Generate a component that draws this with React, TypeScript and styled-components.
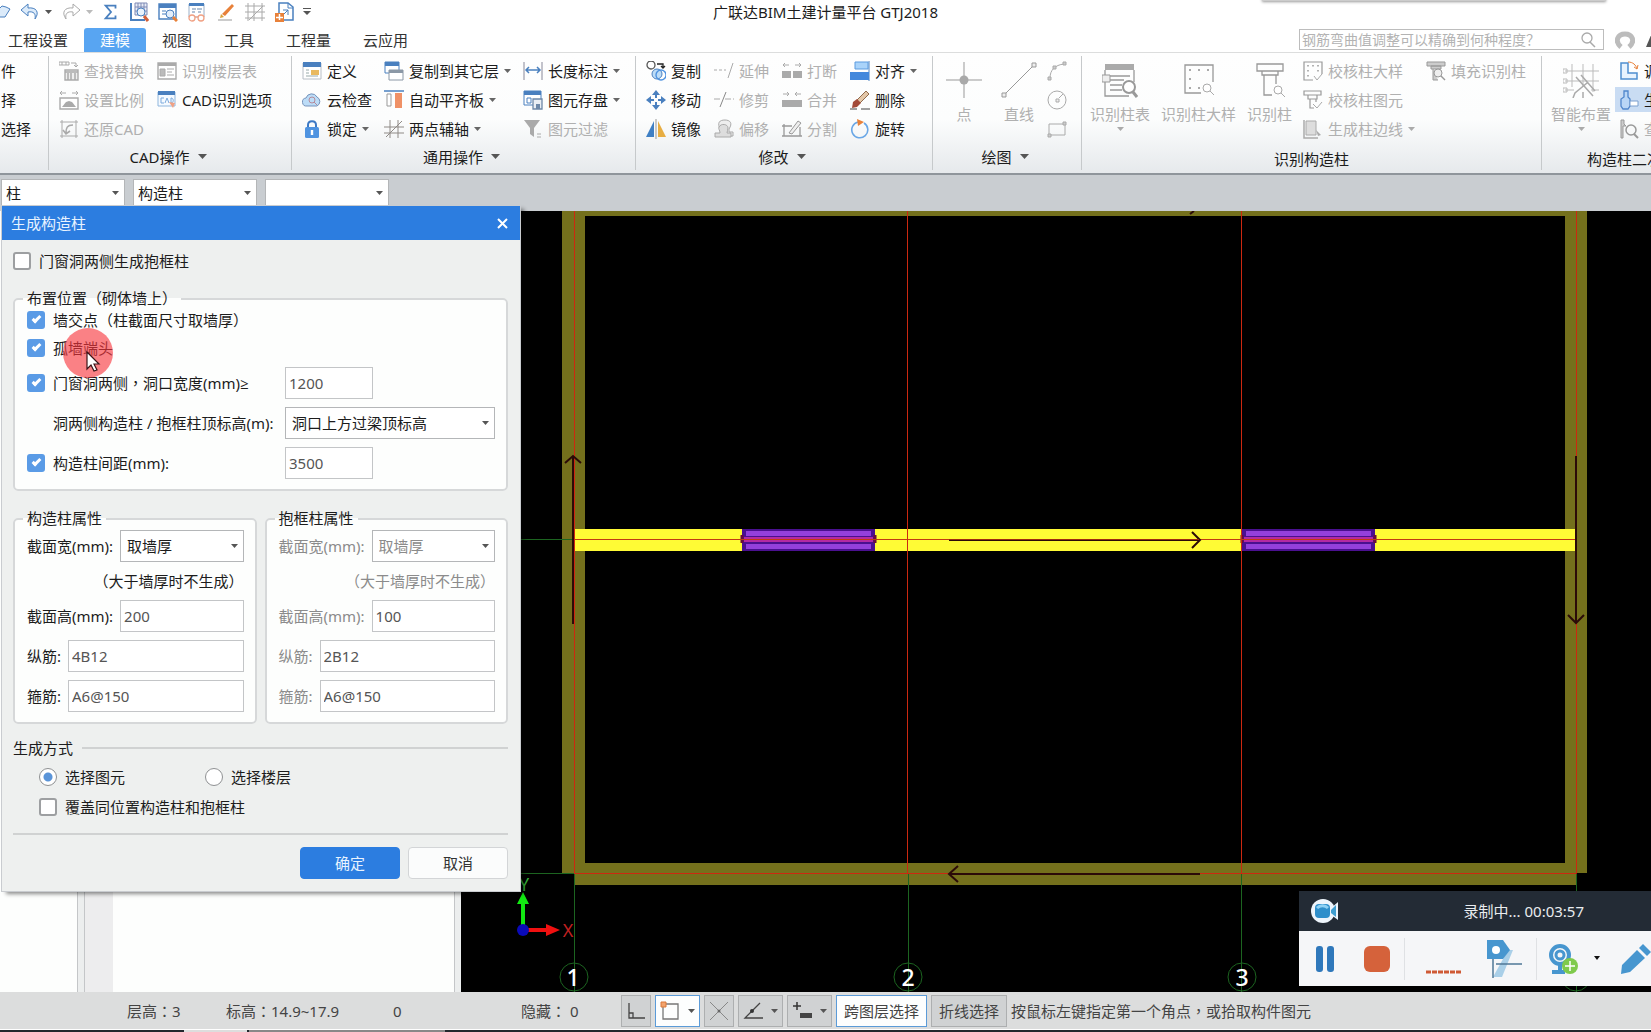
import React from "react";
import styled, { createGlobalStyle, css } from "styled-components";

const Global = createGlobalStyle`
  *, *::before, *::after { box-sizing: border-box; }
  html, body, #root { height: 100%; }
  body {
    margin: 0;
    overflow: hidden;
    background: #fff;
    color: #1c1c1c;
    font: 15px/22px "Noto Sans", "Open Sans", "Noto Sans CJK SC", sans-serif;
  }
  button, input, select { font: inherit; color: inherit; margin: 0; }
  button { border: 0; background: none; padding: 0; white-space: nowrap; cursor: pointer; }
  svg { display: block; flex: none; }
  fieldset { margin: 0; min-width: 0; }
`;

const BLUE = "#4a80bf";
const ORANGE = "#e8813a";
const GRAY = "#aaa";

/* ---------- shell ---------- */

const Shell = styled.div`
  display: flex;
  flex-direction: column;
  height: 100vh;
  overflow: hidden;
  position: relative;
`;

const TitleBar = styled.header`
  display: grid;
  grid-template-columns: 1fr auto 1fr;
  align-items: center;
  height: 24px;
  flex: none;
`;

const QuickTools = styled.div`
  display: flex;
  align-items: center;
  gap: 9px;
  margin-left: -9px;
`;

const QuickButton = styled.button`
  display: flex;
  align-items: center;
  gap: 5px;
`;

const Title = styled.h1`
  margin: 0;
  font-size: 15px;
  font-weight: 400;
  line-height: 22px;
`;

const FloatingEdge = styled.div`
  position: absolute;
  top: -6px;
  right: 45px;
  width: 344px;
  height: 7px;
  background: #ccc;
  box-shadow: 0 1px 3px #999;
`;

const TabRow = styled.nav`
  display: flex;
  align-items: flex-end;
  height: 29px;
  flex: none;
  border-bottom: 1px solid #dcdddd;
`;

const Tabs = styled.div`
  display: flex;
  margin-left: -8px;
`;

const Tab = styled.button<{ $active?: boolean }>`
  height: 24px;
  padding: 0 16px;
  line-height: 22px;
  border-radius: 3px 3px 0 0;
  color: ${(p) => (p.$active ? "#fff" : "#333")};
  background: ${(p) => (p.$active ? "#58a5f2" : "transparent")};
`;

const TabTools = styled.div`
  display: flex;
  align-items: center;
  gap: 11px;
  margin-left: auto;
  height: 25px;
  width: 352px;
  overflow: hidden;
`;

const SearchBox = styled.label`
  display: flex;
  align-items: center;
  flex: 0 0 305px;
  height: 21px;
  padding-right: 7px;
  border: 1px solid #bdbdbd;
  background: #fff;
  input {
    flex: 1;
    min-width: 0;
    border: 0;
    outline: 0;
    padding: 0 2px;
    height: 19px;
    background: none;
    font-size: 14px;
  }
  input::placeholder { color: #b3b3b3; opacity: 1; }
`;

/* Full-width punctuation that sits in the middle of its cell. */
const Mark = styled.span`
  font-family: "Noto Sans CJK TC", sans-serif;
`;

/* ---------- ribbon ---------- */

const Ribbon = styled.section`
  display: flex;
  flex: none;
  height: 122px;
  overflow: hidden;
  padding: 3px 0;
  background: linear-gradient(#fefefe 0%, #fcfdfd 55%, #e6e9ec 100%);
  border-bottom: 2px solid #8f959b;
`;

const Group = styled.div<{ $width: number }>`
  display: flex;
  flex-direction: column;
  flex: 0 0 ${(p) => p.$width}px;
  border-right: 1px solid #c6c9cb;
  overflow: hidden;
`;

const GroupBody = styled.div<{ $gap?: number; $pad?: number }>`
  display: flex;
  height: 87px;
  flex: none;
  gap: ${(p) => p.$gap ?? 13}px;
  padding-left: ${(p) => p.$pad ?? 10}px;
`;

const Column = styled.div`
  display: flex;
  flex-direction: column;
  align-items: flex-start;
  flex: none;
`;

const Tool = styled.button<{ $on?: boolean; $framed?: boolean }>`
  display: flex;
  align-items: center;
  gap: 5px;
  height: 29px;
  color: ${(p) => (p.disabled ? "#b0b0b0" : "#1c1c1c")};
  cursor: ${(p) => (p.disabled ? "default" : "pointer")};
  ${(p) => p.$framed && css`padding: 0 4px;`}
  ${(p) => p.$on && css`background: #c9dcf3; height: 25px; margin: 2px 0;`}
`;

const BigTool = styled.button<{ $width: number }>`
  display: flex;
  flex-direction: column;
  align-items: center;
  flex: 0 0 ${(p) => p.$width}px;
  padding-top: 6px;
  color: #b0b0b0;
  cursor: default;
  span { margin: 5px 0 2px; line-height: 22px; }
`;

const GroupLabel = styled.div<{ $plain?: boolean }>`
  display: flex;
  align-items: center;
  justify-content: center;
  gap: 8px;
  height: 30px;
  padding-right: ${(p) => (p.$plain ? 0 : 4)}px;
  padding-top: ${(p) => (p.$plain ? 4 : 0)}px;
  white-space: nowrap;
`;

const FilterBar = styled.div`
  display: flex;
  gap: 8px;
  flex: none;
  height: 36px;
  padding: 4px 1px;
  background: #c9cdd1;
`;

const SelectShell = styled.span<{ $width?: number; $height?: number; $muted?: boolean }>`
  display: flex;
  align-items: center;
  position: relative;
  flex: ${(p) => (p.$width ? `0 0 ${p.$width}px` : "1 1 0")};
  height: ${(p) => p.$height ?? 32}px;
  min-width: 0;
  border: 1px solid #b4b6b8;
  background: #fff;
  color: ${(p) => (p.$muted ? "#8b8b8b" : "#1c1c1c")};
  select {
    appearance: none;
    width: 100%;
    height: 100%;
    border: 0;
    outline: 0;
    padding: 0 20px 0 ${(p) => (p.$width ? 4 : 6)}px;
    background: transparent;
    color: inherit;
    opacity: 1;
  }
  svg { position: absolute; right: 5px; pointer-events: none; }
`;

/* ---------- workspace ---------- */

const Work = styled.main`
  display: flex;
  flex: 1;
  min-height: 0;
  background: #eceeee;
`;

const SidePanel = styled.aside<{ $width: number; $gutter?: boolean }>`
  flex: 0 0 ${(p) => p.$width}px;
  margin-right: 6px;
  border-right: 1px solid #c4c6c8;
  border-left: ${(p) => (p.$gutter ? "1px solid #c4c6c8" : "0")};
  background: ${(p) => (p.$gutter ? "linear-gradient(90deg, #ededee 28px, #fdfefd 28px)" : "#fdfefd")};
`;

const Canvas = styled.div`
  flex: 1;
  min-width: 0;
  background: #000;
  overflow: hidden;
`;

const StatusBar = styled.footer`
  display: flex;
  align-items: center;
  gap: 4px;
  flex: none;
  height: 38px;
  background: #dcdddd;
  border-bottom: 1px solid #fff;
  color: #444;
  white-space: nowrap;
`;

const StatusInfo = styled.div`
  display: grid;
  grid-template-columns: 99px 167px 128px 96px;
  flex: 0 0 617px;
  padding-left: 127px;
`;

const StatusButton = styled.button<{ $on?: boolean; $pad?: number }>`
  display: flex;
  align-items: center;
  justify-content: center;
  gap: 8px;
  height: 32px;
  padding: 0 ${(p) => p.$pad ?? 4}px;
  color: #444;
  border: 1px solid ${(p) => (p.$on ? "#5b9bd8" : "#adafb0")};
  background: ${(p) => (p.$on ? "#fdfefe" : "#d0d2d3")};
`;

const TaskStrip = styled.div`
  flex: none;
  height: 2px;
  background: linear-gradient(90deg, #23272d 184px, #ddd 184px, #ddd 247px, #23272d 247px, #23272d 249px, #888 249px, #888 445px, #23272d 445px);
`;

/* ---------- dialog ---------- */

const Dialog = styled.form`
  position: absolute;
  left: 2px;
  top: 206px;
  width: 518px;
  background: #eef0ef;
  box-shadow: 0 0 0 1px #c9ccd0, 4px 3px 4px rgba(0, 0, 0, 0.45);
`;

const DialogTitle = styled.div`
  display: flex;
  align-items: center;
  justify-content: space-between;
  height: 34px;
  padding: 0 12px 0 9px;
  background: #2c7de0;
  color: #e8f3ff;
`;

const DialogBody = styled.div`
  padding: 10px 12px 12px 11px;
`;

const CheckLabel = styled.label<{ $height?: number }>`
  display: flex;
  align-items: center;
  gap: 8px;
  height: ${(p) => p.$height ?? 32}px;
  white-space: nowrap;
`;

const CheckInput = styled.input`
  appearance: none;
  flex: none;
  width: 18px;
  height: 18px;
  border: 2px solid #9d9fa1;
  border-radius: ${(p) => (p.type === "radio" ? "50%" : "3px")};
  background: #fff;
  &[type="checkbox"]:checked {
    border-color: #5a9be6;
    background: #5a9be6;
    display: grid;
    place-items: center;
  }
  &[type="checkbox"]:checked::after {
    content: "";
    width: 9px;
    height: 5px;
    margin-top: -3px;
    border: solid #fff;
    border-width: 0 0 3px 3px;
    transform: rotate(-45deg);
  }
  &[type="radio"] { border-width: 1px; border-color: #8f9193; }
  &[type="radio"]:checked { background: radial-gradient(circle, #5a94d8 0 4px, #fff 5px); }
`;

const Box = styled.fieldset<{ $muted?: boolean }>`
  position: relative;
  flex: 1 1 0;
  padding: 10px 11px 10px 12px;
  border: 2px solid #d6d8d9;
  border-radius: 5px;
  background: #fdfefd;
  color: ${(p) => (p.$muted ? "#8b8b8b" : "#1c1c1c")};
`;

const PlacementBox = styled(Box)`
  margin-top: 26px;
  padding-top: 8px;
`;

const BoxTitle = styled.legend`
  position: absolute;
  top: -13px;
  left: 8px;
  padding: 0 4px;
  line-height: 22px;
  color: #1c1c1c;
  background: linear-gradient(#eef0ef 50%, #fdfefd 50%);
`;

const PlacementGrid = styled.div`
  display: grid;
  grid-template-columns: 258px 1fr;
  align-items: center;
  row-gap: 8px;
  margin-top: 3px;
`;

const Indented = styled.label`
  padding-left: 26px;
  white-space: nowrap;
`;

const TextField = styled.input<{ $width?: number }>`
  flex: 1 1 0;
  min-width: 0;
  width: ${(p) => (p.$width ? `${p.$width}px` : "auto")};
  height: 32px;
  padding: 0 3px;
  border: 1px solid #c3c5c7;
  outline: 0;
  background: #fff;
  color: #555;
`;

const BoxPair = styled.div`
  display: flex;
  gap: 8px;
  margin: 27px 0 13px;
`;

const FieldStack = styled.div`
  display: flex;
  flex-direction: column;
  gap: 8px;
`;

const Field = styled.label`
  display: flex;
  align-items: center;
  gap: 7px;
  white-space: nowrap;
`;

const Note = styled.div`
  height: 22px;
  text-align: right;
`;

const SectionTitle = styled.div`
  display: flex;
  align-items: center;
  gap: 9px;
  &::after { content: ""; flex: 1; height: 2px; background: #d0d2d2; }
`;

const ModeGrid = styled.div`
  display: grid;
  grid-template-columns: 166px 1fr;
  padding: 2px 26px 12px;
`;

const Wide = styled.div`
  grid-column: 1 / -1;
`;

const DialogFooter = styled.div`
  display: flex;
  justify-content: flex-end;
  gap: 8px;
  padding-top: 12px;
  border-top: 2px solid #d0d2d2;
`;

const DialogButton = styled.button<{ $primary?: boolean }>`
  width: 100px;
  height: 32px;
  border-radius: 4px;
  border: 1px solid ${(p) => (p.$primary ? "#2c7de0" : "#d3d5d7")};
  background: ${(p) => (p.$primary ? "#2c7de0" : "#fbfcfc")};
  color: ${(p) => (p.$primary ? "#e8f3ff" : "#333")};
`;

const Pointer = styled.div`
  position: absolute;
  left: 63px;
  top: 328px;
  pointer-events: none;
`;

/* ---------- recorder ---------- */

const Recorder = styled.section`
  position: absolute;
  right: 0;
  bottom: 46px;
  width: 352px;
  overflow: hidden;
`;

const RecorderHead = styled.div`
  display: flex;
  align-items: center;
  justify-content: space-between;
  height: 40px;
  padding: 0 67px 0 11px;
  background: #232b35;
  color: #e9ecef;
`;

const RecorderBody = styled.div`
  display: grid;
  grid-template-columns: 36px 53px 79px 53px 49px 35px 32px;
  align-items: center;
  height: 55px;
  padding-left: 16px;
  background: #f5f6f8;
`;

const RecorderCell = styled.button<{ $pad?: number }>`
  display: flex;
  align-items: center;
  height: 42px;
  padding-left: ${(p) => p.$pad ?? 0}px;
  ${(p) => p.$pad && css`border-left: 1px solid #dfe1e4;`}
`;

/* ---------- icons ---------- */

const Caret = ({ size = 7, color = "#555" }: { size?: number; color?: string }) => (
  <svg width={size} height={size === 7 ? 4 : 5} viewBox="0 0 8 5" preserveAspectRatio="none" aria-hidden="true">
    <path d="M0 0h8L4 5z" fill={color} />
  </svg>
);

const art: Record<string, React.ReactNode> = {
  folder: <path d="M0 15 5 6h4l2-2 4 1 4 2-5 8z" fill="#dcebfa" stroke={BLUE} />,
  undo: <path d="M8 2 1 8l7 6v-4c6-1 8 2 7 7 5-7 1-12-7-11z" fill="#dcebfa" stroke={BLUE} strokeLinejoin="round" />,
  redo: <path d="m12 2 7 6-7 6v-4c-6-1-8 2-7 7-5-7-1-12 7-11z" fill="#fff" stroke="#aaa" strokeLinejoin="round" />,
  sigma: <path d="M15 6V3H4l6 7-6 7h11v-3" fill="none" stroke={BLUE} strokeWidth="2" />,
  report: <><path d="M2 1v17h14" fill="none" stroke={BLUE} strokeWidth="2" /><path d="M6 1h12v12H6zM9 1v12M12 1v12M15 1v12M6 5h12M6 9h12" fill="#e8ecf6" stroke="#7f8ab5" /><circle cx="12" cy="10" r="4" fill="#eaf3fc" stroke={BLUE} /><path d="m15 14 4 5" stroke="#d2603a" strokeWidth="3" /></>,
  find: <><path d="M1 2h17v15H1z" fill="#fff" stroke={BLUE} strokeWidth="1.4" /><path d="M1 2h17v4H1z" fill={BLUE} /><path d="M4 9h4M4 12h4" stroke={BLUE} /><circle cx="12" cy="12" r="4" fill="#e2eefb" stroke={BLUE} /><path d="m15 15 4 4" stroke={ORANGE} strokeWidth="3" /></>,
  glasses: <><path d="M2 2h15v13H2z" fill="#fff" stroke="#9bb0c8" /><path d="M2 1h15v3H2z" fill={BLUE} /><path d="M5 7h4M10 7h5M5 10h3M11 10h3" stroke="#9bb0c8" strokeWidth="1.400" /><circle cx="5" cy="16" r="3" fill="#fff" stroke="#f0a184" strokeWidth="1.300" /><circle cx="14" cy="16" r="3" fill="#fff" stroke="#f0a184" strokeWidth="1.300" /><path d="M8 15h3" stroke="#f0a184" /></>,
  brush: <><path d="m6 12 10-10 2 2-9 10z" fill={ORANGE} /><path d="m5 12 3 3-4 1z" fill="#d9a13a" /><path d="M2 18h14" stroke="#999" /></>,
  grid: <path d="M3 1v18M9 1v18M17 1v18M0 4h20M0 10h20M0 16h20M4 18 18 4" stroke="#aaa" fill="none" />,
  addpage: <><path d="M5 1h9l5 4v13H5z" fill="#fff" stroke={BLUE} strokeWidth="1.5" /><path d="M14 1v5h5" fill="none" stroke={BLUE} /><path d="M1 11h9v9H1z" fill={ORANGE} /><path d="M5.500 12v6M2 15.500h7" stroke="#fff" strokeWidth="1.500" /><path d="M9 8h5v5M14 8l-4 4" fill="none" stroke={BLUE} /></>,
  replace: <><path d="M0 1h10v3H0zM3 1v3M7 1v3M12 2h5v4M15 4l2 2 2-2" fill="none" stroke={GRAY} /><path d="M6 9h13v10H6z" fill="#eee" stroke={GRAY} strokeWidth="1.400" /><path d="M6 11h13M9 12v7M12 12v7M16 12v7" stroke={GRAY} strokeWidth="1.500" /></>,
  scale: <><path d="M1 3h6M13 3h6M3 1 1 3l2 2M17 1l2 2-2 2" fill="none" stroke={GRAY} /><path d="M1 8h18v11H1z" fill="#fff" stroke={GRAY} strokeWidth="1.400" /><path d="m3 17 4-5 3-1 3 1 4 5z" fill={GRAY} /></>,
  restore: <><path d="M3 1v18M1 3h18M17 1v18M1 17h18" fill="none" stroke={GRAY} /><path d="M14 6c-6 0-7 3-7 8M4 11l3 4 4-3" fill="none" stroke={GRAY} strokeWidth="1.600" /></>,
  floor: <><path d="M1 2h18v16H1z" fill="#fff" stroke={GRAY} strokeWidth="1.400" /><path d="M1 2h18v3H1z" fill={GRAY} /><path d="M3 8h5v7H3z" fill="#bbb" /><path d="M3 8h5v7H3zM10 8h7M10 11h5M10 14h7" fill="none" stroke={GRAY} /></>,
  cad: <><path d="M1 2h17v14H1z" fill="#f5faff" stroke="#8fb6dd" /><path d="M1 1h17v4H1z" fill={BLUE} /><path d="M7 8H4v5h3M8 13l2-5 2 5M14 8v5c3 0 3-5 0-5" fill="none" stroke="#7aa9dc" /><path d="m12 12 6 1-2 5z" fill="#f0a184" /></>,
  define: <><path d="M1 2h18v16H1z" fill="#fff" stroke="#b8bec6" /><path d="M1 1h18v5H1z" fill={BLUE} /><path d="M4 9h3M4 12h3M4 15h12" stroke="#9aa" /><path d="M9 9h8v5H9z" fill="#e9b95f" /></>,
  cloud: <><path d="M5 16a4 4 0 0 1-1-8 6 6 0 0 1 11-1 5 5 0 0 1 0 9z" fill="#bcdcf7" stroke="#7693bb" /><circle cx="10" cy="10" r="3" fill="none" stroke="#b58b9a" /><path d="m12 12 3 3" stroke="#b58b9a" /></>,
  lock: <><path d="M6 9V6c0-5 8-5 8 0v3" fill="none" stroke="#3d79c4" strokeWidth="2" /><rect x="3" y="8" width="14" height="11" rx="1.500" fill="#4f93e0" /><path d="M10 11v5" stroke="#fff" strokeWidth="2.400" /></>,
  copyfloor: <><path d="M1 1h14v11H1z" fill="#fff" stroke={BLUE} /><path d="M1 1h14v4H1z" fill={BLUE} /><path d="M5 9h14v10H5z" fill="#fff" stroke="#8b98a6" /><path d="M5 9h14v3H5z" fill="#8b98a6" /></>,
  align: <><path d="M0 1h20" stroke={BLUE} strokeWidth="1.500" /><path d="M3 4h4v12H3z" fill="#fff" stroke="#999" /><path d="M11 3h7v15h-7z" fill="#ef9166" /></>,
  axis: <path d="M6 1v18M14 1v18M0 8h20M0 14h20M2 18 18 2" fill="none" stroke="#8f8a86" />,
  length: <><path d="M1 1v18M19 1v18" stroke="#889" /><path d="M3 9h14M6 6 3 9l3 3M14 6l3 3-3 3" fill="none" stroke={BLUE} strokeWidth="1.500" /></>,
  save: <><path d="M1 1h17v14H1z" fill="#fff" stroke={BLUE} /><path d="M1 1h17v4H1z" fill={BLUE} /><path d="M4 8h4v5H4z" fill="#fff" stroke={BLUE} /><path d="M10 9h9v10h-9z" fill="#e9eef4" stroke="#6d88a8" strokeWidth="1.300" /><path d="M13 14h4v5h-4z" fill="#6d88a8" /></>,
  filter: <><path d="M1 1h16l-6 8v9l-4-3V9z" fill={GRAY} /><path d="M14 15h4M14 18h4" stroke={GRAY} /></>,
  copy: <><circle cx="5" cy="4" r="4" fill="#fff" stroke="#555" strokeWidth="1.300" /><path d="M11 3h6v4M15 5l2 2 2-2" fill="none" stroke="#222" strokeWidth="1.300" /><circle cx="11" cy="13" r="5" fill="#bcdcf7" stroke={BLUE} /><circle cx="15" cy="14" r="5" fill="none" stroke="#4f93e0" strokeWidth="1.400" /></>,
  move: <path d="m10 0 4 5h-3v3H9V5H6zM10 20l4-5h-3v-3H9v3H6zM0 10l5-4v3h3v2H5v3zM20 10l-5-4v3h-3v2h3v3z" fill={BLUE} />,
  mirror: <><path d="M8 2v16H0z" fill="#3f7fc4" /><path d="M12 2v16h8z" fill="#e7ad42" /><path d="M10 0v20" stroke="#999" /></>,
  extend: <><path d="M0 9h12" stroke={GRAY} strokeDasharray="3 2" /><path d="m19 2-5 15" stroke={GRAY} /></>,
  trim: <><path d="M0 9h6M11 9h9" stroke={GRAY} strokeDasharray="6 2 2 2" /><path d="M12 2 6 17" stroke="#888" /></>,
  offset: <><path d="M7 12C2 3 6 1 11 1s8 3 4 9v3h4v4H7" fill="#eee" stroke={GRAY} /><path d="M1 18v-4h5c0-3-2-4-1-6 2-4 9-3 9 1 0 2-1 3-1 5h4v4z" fill="#ddd" stroke={GRAY} /></>,
  breakit: <><path d="M1 4h6M13 4h6M3 2 1 4l2 2M17 2l2 2-2 2" fill="none" stroke={GRAY} /><path d="M0 10h9v7H0zM11 10h9v7h-9z" fill={GRAY} /></>,
  merge: <><path d="M1 4h6M13 4h6M5 2l2 2-2 2M15 2l-2 2 2 2" fill="none" stroke={GRAY} /><path d="M0 10h20v7H0z" fill={GRAY} /></>,
  split: <><path d="M2 5v12h16V8M0 7h10M0 17h20" fill="none" stroke="#999" strokeWidth="1.300" /><path d="m7 14 9-12 3 2-9 11z" fill="#eee" stroke="#999" /></>,
  alignto: <><path d="M19 0v20" stroke={BLUE} /><path d="M5 1h13v7H5z" fill="#a9d3fa" stroke="#5b9be0" /><path d="M0 11h19v8H0z" fill="#4388dc" /></>,
  erase: <><path d="m7 10 9-9 3 3-9 9z" fill="#e3c7a8" stroke="#8f6a4c" /><path d="m3 12 4-3 4 4-4 4-5 1z" fill="#a34a39" /><path d="M0 19h7M11 19h9" stroke="#444" /></>,
  rotate: <><path d="M8 3a8 8 0 1 0 6 1" fill="none" stroke="#6aa7e6" strokeWidth="1.600" /><path d="m7 0 7 3-6 4z" fill={ORANGE} /></>,
  arc: <><path d="M3 17C3 9 8 4 17 3" fill="none" stroke={GRAY} /><path d="M1 16h3v3H1zM6 5h3v3H6zM16 1h3v3h-3z" fill="#ccc" stroke={GRAY} /></>,
  circle: <><circle cx="10" cy="10" r="9" fill="none" stroke={GRAY} /><path d="M9 9h3v3H9z" fill="#eee" stroke={GRAY} /><path d="m12 8 4-4" stroke={GRAY} /></>,
  rect: <><path d="M2 5h16v11H2z" fill="none" stroke={GRAY} /><path d="M1 15h3v3H1zM16 3h3v3h-3z" fill="#ccc" stroke={GRAY} /></>,
  checkdetail: <><path d="M19 13V1H1v18h9" fill="none" stroke="#999" strokeWidth="1.200" /><path d="M5 4v12M10 4v3M15 4v7" stroke="#999" strokeWidth="1.500" strokeDasharray="1.500 3.500" /><path d="m11 15 3 4 5-6" fill="none" stroke={GRAY} /></>,
  checkcol: <><path d="M1 1h17v4H1zM5 5h9v4H5zM7 9v9h4M13 9v3" fill="none" stroke="#999" strokeWidth="1.200" /><path d="m10 14 4 4 5-6" fill="none" stroke={GRAY} /></>,
  edge: <><path d="M1 1v18h14" fill="none" stroke={GRAY} strokeWidth="1.500" /><path d="M3 2h10v14H3z" fill="#ddd" stroke={GRAY} /><path d="m13 11 5 5-3 1z" fill={GRAY} /></>,
  fillcol: <><path d="M1 1h18v4H1zM5 5h10v3H5zM7 8v11h5" fill="#ccc" stroke="#999" /><circle cx="12" cy="12" r="4" fill="#eee" stroke="#999" /><path d="m15 15 4 4" stroke="#999" strokeWidth="1.500" /></>,
  adjust: <><path d="M2 2v16h16v-6H9V2z" fill="#e8f3fe" stroke="#4f8fd0" strokeWidth="1.500" /><path d="M9 1c5 0 8 3 9 7M15 6l3 2 1-4" fill="none" stroke={ORANGE} /></>,
  gencol: <><path d="M5 1h4v6l2 2v7l-2 3H4l-2-3V9l3-2z" fill="#b9d6f6" stroke="#4f86cc" strokeWidth="1.300" /><path d="M11 11h8v5h-8z" fill="#fff" stroke="#7da0cf" /></>,
  querycol: <><path d="M2 1h3v4l2 2H4v12H2z" fill="#ccc" stroke="#999" /><circle cx="12" cy="11" r="5" fill="none" stroke="#999" strokeWidth="1.500" /><path d="m15 15 4 4" stroke="#999" strokeWidth="2" /></>,
};

const Icon = ({ name, size = 20 }: { name: string; size?: number }) => (
  <svg width={size} height={size} viewBox="0 0 20 20" aria-hidden="true">{art[name]}</svg>
);

const bigArt: Record<string, React.ReactNode> = {
  point: <><path d="M18 0v36M0 18h36" stroke="#999" /><circle cx="18" cy="18" r="4.500" fill="#a9a9a9" /></>,
  line: <><path d="M3 33 33 3" stroke="#999" /><path d="M1 31h4v4H1zM31 1h4v4h-4z" fill="#eee" stroke="#999" /></>,
  table: <><path d="M3 2h29v6H3z" fill={GRAY} /><path d="M3 8v26h24M32 8v12M8 14h20M8 18h14M8 23h12M8 28h12" fill="none" stroke="#999" strokeWidth="1.300" /><path d="M0 13h8v7H0z" fill="#eee" stroke="#999" /><circle cx="27" cy="25" r="6" fill="#fff" stroke="#999" strokeWidth="2" /><path d="m31 30 4 5" stroke="#999" strokeWidth="3" /></>,
  detail: <><path d="M32 20V3H4v28h16" fill="none" stroke="#999" strokeWidth="1.300" /><path d="M8 7h2v2H8zM17 7h2v2h-2zM26 7h2v2h-2zM8 16h2v2H8zM8 25h2v2H8zM17 25h2v2h-2z" fill={GRAY} /><circle cx="26" cy="26" r="4" fill="#fff" stroke={GRAY} /><path d="m29 29 4 4" stroke={GRAY} /></>,
  column: <><path d="M5 2h26v7H5zM10 9h16v4H10zM12 13v20h8M24 13v9" fill="none" stroke="#999" strokeWidth="1.300" /><circle cx="26" cy="28" r="4" fill="#fff" stroke={GRAY} /><path d="m29 31 4 4" stroke={GRAY} /></>,
  smart: <><path d="M9 2v23M20 2v22M30 2v28M2 9h34M2 19h34M2 28h9M28 28h8" fill="none" stroke="#bbb" /><path d="m13 15 17 19M18 13l14 16M10 36l2-5 12-10M20 36v-6" fill="none" stroke="#aaa" strokeWidth="1.500" /><path d="M0 7h4v4H0zM0 17h4v4H0zM0 26h4v4H0z" fill="none" stroke="#bbb" /></>,
};

const BigIcon = ({ name }: { name: string }) => (
  <svg width="36" height="36" viewBox="0 0 36 36" aria-hidden="true">{bigArt[name]}</svg>
);

type ToolSpec = { icon?: string; text?: string; off?: boolean; menu?: boolean; on?: boolean; label?: string };

const ToolColumn = ({ items, framed }: { items: ToolSpec[]; framed?: boolean }) => (
  <Column>
    {items.map((t) => (
      <Tool key={t.text ?? t.label} disabled={t.off} $on={t.on} $framed={framed} aria-label={t.label ?? t.text}>
        {t.icon && <Icon name={t.icon} />}
        {t.text}
        {t.menu && <Caret color={t.off ? "#aaa" : "#666"} />}
      </Tool>
    ))}
  </Column>
);

const Big = ({ icon, text, width, menu }: { icon: string; text: string; width: number; menu?: boolean }) => (
  <BigTool $width={width} disabled>
    <BigIcon name={icon} />
    <span>{text}</span>
    {menu && <Caret color="#aaa" />}
  </BigTool>
);

/* ---------- drawing ---------- */

const OLIVE = "#74701c";

const Opening = ({ x }: { x: number }) => (
  <g>
    <rect x={x} y="529" width="133" height="22" fill="#4a1090" />
    <rect x={x + 4} y="531" width="125" height="5" fill="#9440dc" />
    <rect x={x + 2} y="537" width="129" height="5" fill="#b32aa4" />
    <rect x={x + 4} y="544" width="125" height="5" fill="#9440dc" />
    <path d={`M${x} 535v8M${x + 133} 535v8`} stroke="#6b0d3c" strokeWidth="3" />
  </g>
);

const Plan = () => (
  <svg width="100%" height="100%" role="img" aria-label="平面图">
    <g transform="translate(-461 -211)">
      <path d="M562 211h1025v662h-11v12H574v-12h-12zM585 216v647h980V216z" fill={OLIVE} fillRule="evenodd" />
      <rect x="575" y="529" width="1000" height="22" fill="#fffb35" />
      <Opening x={742} />
      <Opening x={1242} />
      <g stroke="#1c6420" fill="none">
        <path d="M461 539.500h113M461 873.500h113M574.500 874v118M908.500 874v118M1241.500 874v118M1576.500 874v118" />
        <circle cx="574" cy="977" r="14" />
        <circle cx="908" cy="977" r="14" />
        <circle cx="1242" cy="977" r="14" />
        <circle cx="1576" cy="977" r="14" />
      </g>
      <path d="M574.500 211v662.500h1002V211M907.500 211v662M1241.500 211v662" stroke="#cc2810" fill="none" />
      <path d="M575 539.500h1000" stroke="#c13a12" strokeWidth="1" />
      <g stroke="#2b0a08" strokeWidth="2" fill="none">
        <path d="M573 624V456M565 463l8-7 8 7" />
        <path d="M1576 456v167M1568 615l8 8 8-8" />
        <path d="M949 540h251M1192 532l8 8-8 8" />
        <path d="M1200 874H949M958 866l-9 8 9 8" />
        <path d="M1190 214l4-3" />
      </g>
      <path d="M949 539.500h250" stroke="#a02a10" />
      <g fill="#fff" fontFamily='"Noto Sans", sans-serif' fontSize="23" fontWeight="500" textAnchor="middle">
        <text x="573" y="986">1</text>
        <text x="908" y="986">2</text>
        <text x="1242" y="986">3</text>
      </g>
      <path d="M521 930v-26h-4l6-12 6 12h-4v26z" fill="#12e812" />
      <path d="M523 928h23v-4l14 6-14 6v-4h-23z" fill="#f01010" />
      <circle cx="523" cy="930" r="6" fill="#0a0ab8" />
      <g fontFamily='"Noto Sans", sans-serif' fontSize="18" textAnchor="middle">
        <text x="524" y="891" fill="#35b13a">Y</text>
        <text x="568" y="937" fill="#c22020">X</text>
      </g>
    </g>
  </svg>
);

const Picker = ({ options, width, height, muted, id, label }: { options: string[]; width?: number; height?: number; muted?: boolean; id?: string; label: string }) => (
  <SelectShell $width={width} $height={height} $muted={muted}>
    <select id={id} aria-label={label} disabled={muted}>
      {options.map((o) => <option key={o}>{o}</option>)}
    </select>
    <Caret />
  </SelectShell>
);

const PropertyBox = ({ title, height, main, stirrup, muted }: { title: string; height: string; main: string; stirrup: string; muted?: boolean }) => (
  <Box $muted={muted}>
    <BoxTitle>{title}</BoxTitle>
    <FieldStack>
      <Field>截面宽(mm):<Picker label={title + "截面宽"} options={["取墙厚"]} muted={muted} /></Field>
      <Note>（大于墙厚时不生成）</Note>
      <Field>截面高(mm):<TextField defaultValue={height} /></Field>
      <Field>纵筋:<TextField defaultValue={main} /></Field>
      <Field>箍筋:<TextField defaultValue={stirrup} /></Field>
    </FieldStack>
  </Box>
);

const GenerateDialog = () => (
  <Dialog onSubmit={(e) => e.preventDefault()}>
    <DialogTitle>
      生成构造柱
      <button type="button" aria-label="关闭">
        <svg width="11" height="11" viewBox="0 0 11 11"><path d="m1 1 9 9M10 1l-9 9" stroke="#fff" strokeWidth="2" /></svg>
      </button>
    </DialogTitle>
    <DialogBody>
      <CheckLabel $height={22}><CheckInput type="checkbox" />门窗洞两侧生成抱框柱</CheckLabel>
      <PlacementBox>
        <BoxTitle>布置位置（砌体墙上）</BoxTitle>
        <CheckLabel $height={24}><CheckInput type="checkbox" defaultChecked />墙交点（柱截面尺寸取墙厚）</CheckLabel>
        <CheckLabel><CheckInput type="checkbox" defaultChecked />孤墙端头</CheckLabel>
        <PlacementGrid>
          <CheckLabel>
            <CheckInput type="checkbox" defaultChecked />
            <span>门窗洞两侧<Mark>，</Mark>洞口宽度(mm)≥</span>
          </CheckLabel>
          <TextField $width={88} defaultValue="1200" aria-label="洞口宽度" />
          <Indented htmlFor="top-level">洞两侧构造柱 / 抱框柱顶标高(m):</Indented>
          <Picker id="top-level" label="顶标高" options={["洞口上方过梁顶标高"]} />
          <CheckLabel><CheckInput type="checkbox" defaultChecked />构造柱间距(mm):</CheckLabel>
          <TextField $width={88} defaultValue="3500" aria-label="构造柱间距" />
        </PlacementGrid>
      </PlacementBox>
      <BoxPair>
        <PropertyBox title="构造柱属性" height="200" main="4B12" stirrup="A6@150" />
        <PropertyBox title="抱框柱属性" height="100" main="2B12" stirrup="A6@150" muted />
      </BoxPair>
      <SectionTitle>生成方式</SectionTitle>
      <ModeGrid>
        <CheckLabel><CheckInput type="radio" name="mode" defaultChecked />选择图元</CheckLabel>
        <CheckLabel><CheckInput type="radio" name="mode" />选择楼层</CheckLabel>
        <Wide><CheckLabel $height={28}><CheckInput type="checkbox" />覆盖同位置构造柱和抱框柱</CheckLabel></Wide>
      </ModeGrid>
      <DialogFooter>
        <DialogButton $primary>确定</DialogButton>
        <DialogButton type="button">取消</DialogButton>
      </DialogFooter>
    </DialogBody>
  </Dialog>
);

const ScreenRecorder = () => (
  <Recorder aria-label="录制">
    <RecorderHead>
      <svg width="29" height="26" viewBox="0 0 29 26" aria-hidden="true">
        <circle cx="13" cy="13" r="12" fill="#eef5fc" />
        <path d="m20 11 8-7v18l-8-6z" fill="#eef5fc" />
        <path d="m21 12 5-5v12l-5-4z" fill="#3f9ed0" />
        <rect x="5" y="6" width="15" height="14" rx="4" fill="#2f8fcb" />
        <path d="M7 10c3-3 8-3 11 0" stroke="#8fd1f4" strokeWidth="3" fill="none" />
      </svg>
      <span>录制中... 00:03:57</span>
    </RecorderHead>
    <RecorderBody>
      <RecorderCell aria-label="暂停">
        <svg width="20" height="26" viewBox="0 0 20 26"><rect x="1" width="7" height="26" rx="3" fill="#2f78bb" /><rect x="12" width="7" height="26" rx="3" fill="#2f78bb" /></svg>
      </RecorderCell>
      <RecorderCell aria-label="停止">
        <svg width="40" height="26" viewBox="0 0 40 26"><rect x="13" width="26" height="26" rx="6" fill="#d5623b" /></svg>
      </RecorderCell>
      <RecorderCell aria-label="音量" $pad={17}>
        <svg width="42" height="32" viewBox="0 0 42 32"><path d="M4 29h36" stroke="#cf5a35" strokeWidth="3" strokeDasharray="5 1" /></svg>
      </RecorderCell>
      <RecorderCell aria-label="标记">
        <svg width="40" height="40" viewBox="0 0 40 40"><path d="M25 11h5L19 38h-9z" fill="#a9cfe8" /><path d="M4 1h16l7 10-7 9H4z" fill="#4796cf" /><circle cx="13" cy="11" r="4" fill="#fff" /><path d="M10 20v19M13 25h26" stroke="#4f7896" strokeWidth="1.500" /></svg>
      </RecorderCell>
      <RecorderCell aria-label="摄像头" $pad={11}>
        <svg width="30" height="32" viewBox="0 0 30 32"><circle cx="12" cy="12" r="9" fill="none" stroke="#4796cf" strokeWidth="4" /><circle cx="12" cy="12" r="4" fill="none" stroke="#4796cf" strokeWidth="3" /><path d="M4 29h13M12 22v7" stroke="#4796cf" strokeWidth="4" /><circle cx="22" cy="23" r="8" fill="#7fca4c" /><path d="M22 18v10M17 23h10" stroke="#fff" strokeWidth="1.500" /></svg>
      </RecorderCell>
      <RecorderCell aria-label="摄像头选项">
        <svg width="28" height="5" viewBox="0 0 28 5"><path d="M9 0h6l-3 4z" fill="#111" /></svg>
      </RecorderCell>
      <RecorderCell aria-label="画笔">
        <svg width="32" height="32" viewBox="0 0 32 32"><path d="m2 22 15-15 8 8L10 29 1 31zM19 5l4-4 8 8-4 4z" fill="#4796cf" /></svg>
      </RecorderCell>
    </RecorderBody>
  </Recorder>
);

export default function App() {
  return (
    <Shell>
      <Global />
      <TitleBar>
        <QuickTools>
          <QuickButton aria-label="打开"><Icon name="folder" /></QuickButton>
          <QuickButton aria-label="撤销"><Icon name="undo" /><Caret /></QuickButton>
          <QuickButton aria-label="恢复"><Icon name="redo" /><Caret color="#bbb" /></QuickButton>
          <QuickButton aria-label="汇总计算"><Icon name="sigma" size={18} /></QuickButton>
          {["report", "find", "glasses", "brush", "grid", "addpage"].map((n) => (
            <QuickButton key={n} aria-label={n}><Icon name={n} /></QuickButton>
          ))}
          <QuickButton aria-label="更多">
            <svg width="8" height="8" viewBox="0 0 8 8"><path d="M0 .500h8" stroke="#555" /><path d="M0 3h8L4 7z" fill="#555" /></svg>
          </QuickButton>
        </QuickTools>
        <Title>广联达BIM土建计量平台 GTJ2018</Title>
      </TitleBar>
      <FloatingEdge />
      <TabRow>
        <Tabs>
          {["工程设置", "建模", "视图", "工具", "工程量", "云应用"].map((t) => (
            <Tab key={t} $active={t === "建模"}>{t}</Tab>
          ))}
        </Tabs>
        <TabTools>
          <SearchBox>
            <input type="text" aria-label="搜索" placeholder="钢筋弯曲值调整可以精确到何种程度？" />
            <svg width="16" height="16" viewBox="0 0 16 16"><circle cx="7" cy="6" r="5" fill="none" stroke="#aaa" strokeWidth="1.300" /><path d="m10 10 5 5" stroke="#aaa" strokeWidth="1.500" /></svg>
          </SearchBox>
          <svg width="20" height="20" viewBox="0 0 20 20"><path d="M6 17C-1 11 3 4 10 4s11 7 4 13" fill="none" stroke="#bcbcbc" strokeWidth="5" /></svg>
          <svg width="12" height="20" viewBox="0 0 12 20"><path d="M6 3 0 17h12z" fill="#555" /></svg>
        </TabTools>
      </TabRow>

      <Ribbon>
        <Group $width={49}>
          <GroupBody $pad={1}>
            <ToolColumn items={[{ text: "件", label: "拾取构件" }, { text: "择", label: "批量选择" }, { text: "选择", label: "按属性选择" }]} />
          </GroupBody>
        </Group>
        <Group $width={243}>
          <GroupBody>
            <ToolColumn items={[{ icon: "replace", text: "查找替换", off: true }, { icon: "scale", text: "设置比例", off: true }, { icon: "restore", text: "还原CAD", off: true }]} />
            <ToolColumn items={[{ icon: "floor", text: "识别楼层表", off: true }, { icon: "cad", text: "CAD识别选项" }]} />
          </GroupBody>
          <GroupLabel>CAD操作<Caret size={9} /></GroupLabel>
        </Group>
        <Group $width={344}>
          <GroupBody $gap={12}>
            <ToolColumn items={[{ icon: "define", text: "定义" }, { icon: "cloud", text: "云检查" }, { icon: "lock", text: "锁定", menu: true }]} />
            <ToolColumn items={[{ icon: "copyfloor", text: "复制到其它层", menu: true }, { icon: "align", text: "自动平齐板", menu: true }, { icon: "axis", text: "两点辅轴", menu: true }]} />
            <ToolColumn items={[{ icon: "length", text: "长度标注", menu: true }, { icon: "save", text: "图元存盘", menu: true }, { icon: "filter", text: "图元过滤", off: true }]} />
          </GroupBody>
          <GroupLabel>通用操作<Caret size={9} /></GroupLabel>
        </Group>
        <Group $width={297}>
          <GroupBody>
            <ToolColumn items={[{ icon: "copy", text: "复制" }, { icon: "move", text: "移动" }, { icon: "mirror", text: "镜像" }]} />
            <ToolColumn items={[{ icon: "extend", text: "延伸", off: true }, { icon: "trim", text: "修剪", off: true }, { icon: "offset", text: "偏移", off: true }]} />
            <ToolColumn items={[{ icon: "breakit", text: "打断", off: true }, { icon: "merge", text: "合并", off: true }, { icon: "split", text: "分割", off: true }]} />
            <ToolColumn items={[{ icon: "alignto", text: "对齐", menu: true }, { icon: "erase", text: "删除" }, { icon: "rotate", text: "旋转" }]} />
          </GroupBody>
          <GroupLabel>修改<Caret size={9} /></GroupLabel>
        </Group>
        <Group $width={149}>
          <GroupBody $pad={4} $gap={0}>
            <Big icon="point" text="点" width={54} />
            <Big icon="line" text="直线" width={56} />
            <ToolColumn items={[{ icon: "arc", label: "弧线", off: true }, { icon: "circle", label: "圆", off: true }, { icon: "rect", label: "矩形", off: true }]} />
          </GroupBody>
          <GroupLabel>绘图<Caret size={9} /></GroupLabel>
        </Group>
        <Group $width={460}>
          <GroupBody $pad={8} $gap={11}>
            <Big icon="table" text="识别柱表" width={60} menu />
            <Big icon="detail" text="识别柱大样" width={75} />
            <Big icon="column" text="识别柱" width={45} />
            <ToolColumn items={[{ icon: "checkdetail", text: "校核柱大样", off: true }, { icon: "checkcol", text: "校核柱图元", off: true }, { icon: "edge", text: "生成柱边线", off: true, menu: true }]} />
            <ToolColumn items={[{ icon: "fillcol", text: "填充识别柱", off: true }]} />
          </GroupBody>
          <GroupLabel $plain>识别构造柱</GroupLabel>
        </Group>
        <Group $width={196}>
          <GroupBody $pad={9} $gap={4}>
            <Big icon="smart" text="智能布置" width={60} menu />
            <ToolColumn framed items={[{ icon: "adjust", text: "调整柱端头" }, { icon: "gencol", text: "生成构造柱", on: true }, { icon: "querycol", text: "查改标注", off: true }]} />
          </GroupBody>
          <GroupLabel $plain>构造柱二次编辑</GroupLabel>
        </Group>
      </Ribbon>

      <FilterBar>
        <Picker label="构件大类" options={["柱"]} width={124} height={28} />
        <Picker label="构件类型" options={["构造柱"]} width={124} height={28} />
        <Picker label="构件" options={[""]} width={124} height={28} />
      </FilterBar>

      <Work>
        <SidePanel $width={78} />
        <SidePanel $width={371} $gutter />
        <Canvas><Plan /></Canvas>
      </Work>

      <StatusBar>
        <StatusInfo>
          <span>层高<Mark>：</Mark>3</span>
          <span>标高<Mark>：</Mark>14.9~17.9</span>
          <span>0</span>
          <span>隐藏<Mark>：</Mark> 0</span>
        </StatusInfo>
        <StatusButton aria-label="正交">
          <svg width="20" height="20" viewBox="0 0 20 20"><path d="M3 2v15h16M3 12h4v5" fill="none" stroke="#444" strokeWidth="1.300" /></svg>
        </StatusButton>
        <StatusButton aria-label="捕捉" $on>
          <svg width="20" height="20" viewBox="0 0 20 20"><path d="M3 3h15v15H3z" fill="none" stroke="#777" strokeWidth="1.300" /><path d="M1 1h5v5H1z" fill="#f3a36c" stroke="#d9783a" /></svg>
          <Caret />
        </StatusButton>
        <StatusButton aria-label="交点" disabled>
          <svg width="20" height="20" viewBox="0 0 20 20"><path d="m1 1 18 18M19 1 1 19" stroke="#888" /><circle cx="10" cy="10" r="1.500" fill="#666" /></svg>
        </StatusButton>
        <StatusButton aria-label="角度">
          <svg width="20" height="20" viewBox="0 0 20 20"><path d="M17 2 2 17h18" fill="none" stroke="#444" strokeWidth="1.300" /><circle cx="9" cy="10" r="2" fill="#333" /></svg>
          <Caret />
        </StatusButton>
        <StatusButton aria-label="动态输入">
          <svg width="20" height="20" viewBox="0 0 20 20"><path d="M5 1v8M1 5h8" stroke="#333" strokeWidth="1.500" /><path d="M8 12h12v5H8z" fill="#444" /></svg>
          <Caret />
        </StatusButton>
        <StatusButton $on $pad={7}>跨图层选择</StatusButton>
        <StatusButton $pad={7}>折线选择</StatusButton>
        <span>按鼠标左键指定第一个角点<Mark>，</Mark>或拾取构件图元</span>
      </StatusBar>
      <TaskStrip />

      <GenerateDialog />
      <Pointer aria-hidden="true">
        <svg width="50" height="50" viewBox="0 0 50 50">
          <circle cx="25" cy="25" r="25" fill="#f8343c" opacity=".62" />
          <path d="M24 24v17l4-4 3 6 3-1-3-6h5z" fill="#fff" stroke="#3a1418" strokeWidth="1.200" />
        </svg>
      </Pointer>
      <ScreenRecorder />
    </Shell>
  );
}
